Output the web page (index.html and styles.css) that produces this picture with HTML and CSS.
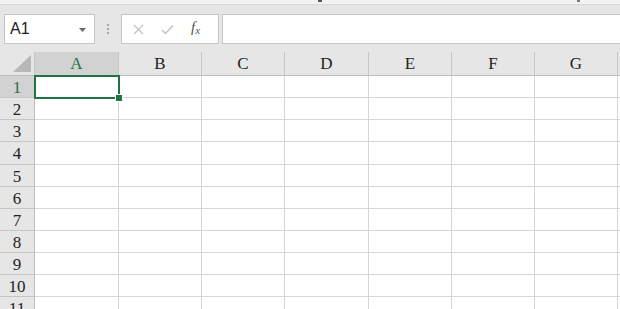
FILE: index.html
```html
<!DOCTYPE html>
<html>
<head>
<meta charset="utf-8">
<link rel="stylesheet" href="styles.css">
</head>
<body>
<div class="app">
  <div class="ribbon-edge"><span class="mark m1"></span><span class="mark m2"></span></div>
  <div class="formula-bar">
    <div class="name-box">
      <span class="name-text">A1</span>
      <svg class="caret" width="7" height="4" viewBox="0 0 7 4"><path d="M0 0h7L3.5 4z" fill="#6a6a6a"/></svg>
    </div>
    <div class="grip"><i></i><i></i><i></i></div>
    <div class="fx-box">
      <svg class="ic" width="11" height="11" viewBox="0 0 11 11"><path d="M1 1L10 10M10 1L1 10" stroke="#c4c4c4" stroke-width="1.3" fill="none"/></svg>
      <svg class="ic" width="13" height="11" viewBox="0 0 13 11"><path d="M1 6L4.5 9.5L12 1.5" stroke="#c4c4c4" stroke-width="1.5" fill="none"/></svg>
      <span class="fx">f<sub>x</sub></span>
    </div>
    <div class="formula-input"></div>
  </div>
  <div class="sheet">
    <div class="grid">
      <div class="corner"><svg width="18" height="17" viewBox="0 0 18 17"><path d="M18 0V17H0z" fill="#b7b7b7"/></svg></div>
      <div class="ch sel">A</div><div class="ch">B</div><div class="ch">C</div><div class="ch">D</div><div class="ch">E</div><div class="ch">F</div><div class="ch">G</div><div class="ch"></div>
      <div class="rh sel">1</div><div class="c"></div><div class="c"></div><div class="c"></div><div class="c"></div><div class="c"></div><div class="c"></div><div class="c"></div><div class="c"></div>
      <div class="rh">2</div><div class="c"></div><div class="c"></div><div class="c"></div><div class="c"></div><div class="c"></div><div class="c"></div><div class="c"></div><div class="c"></div>
      <div class="rh">3</div><div class="c"></div><div class="c"></div><div class="c"></div><div class="c"></div><div class="c"></div><div class="c"></div><div class="c"></div><div class="c"></div>
      <div class="rh">4</div><div class="c"></div><div class="c"></div><div class="c"></div><div class="c"></div><div class="c"></div><div class="c"></div><div class="c"></div><div class="c"></div>
      <div class="rh">5</div><div class="c"></div><div class="c"></div><div class="c"></div><div class="c"></div><div class="c"></div><div class="c"></div><div class="c"></div><div class="c"></div>
      <div class="rh">6</div><div class="c"></div><div class="c"></div><div class="c"></div><div class="c"></div><div class="c"></div><div class="c"></div><div class="c"></div><div class="c"></div>
      <div class="rh">7</div><div class="c"></div><div class="c"></div><div class="c"></div><div class="c"></div><div class="c"></div><div class="c"></div><div class="c"></div><div class="c"></div>
      <div class="rh">8</div><div class="c"></div><div class="c"></div><div class="c"></div><div class="c"></div><div class="c"></div><div class="c"></div><div class="c"></div><div class="c"></div>
      <div class="rh">9</div><div class="c"></div><div class="c"></div><div class="c"></div><div class="c"></div><div class="c"></div><div class="c"></div><div class="c"></div><div class="c"></div>
      <div class="rh">10</div><div class="c"></div><div class="c"></div><div class="c"></div><div class="c"></div><div class="c"></div><div class="c"></div><div class="c"></div><div class="c"></div>
      <div class="rh">11</div><div class="c"></div><div class="c"></div><div class="c"></div><div class="c"></div><div class="c"></div><div class="c"></div><div class="c"></div><div class="c"></div>
    </div>
    <div class="selection"><span class="handle"></span></div>
  </div>
</div>
</body>
</html>
```
FILE: styles.css
```css
html, body {
  margin: 0;
  padding: 0;
  background: #ffffff;
  overflow: hidden;
}
.app {
  width: 620px;
  height: 309px;
  overflow: hidden;
  font-family: "Liberation Sans", Arial, sans-serif;
}
.ribbon-edge {
  position: relative;
  height: 4px;
  background: #f3f3f3;
  border-bottom: 1px solid #d6d6d6;
}
.mark {
  position: absolute;
  top: 0;
  height: 2px;
  background: #555;
}
.m1 { left: 318px; width: 4px; }
.m2 { left: 577px; width: 3px; background: #777; }
.formula-bar {
  height: 47px;
  background: #e6e6e6;
  display: flex;
  align-items: flex-start;
  padding-top: 9px;
  box-sizing: border-box;
}
.name-box {
  margin-left: 4px;
  width: 91px;
  height: 30px;
  box-sizing: border-box;
  background: #fff;
  border: 1px solid #c6c6c6;
  display: flex;
  align-items: center;
  justify-content: space-between;
  padding: 0 8px 0 5px;
}
.name-text {
  font-size: 16px;
  color: #222;
}
.caret { margin-top: 1px; }
.grip {
  width: 26px;
  height: 30px;
  display: flex;
  flex-direction: column;
  align-items: center;
  justify-content: center;
  gap: 2px;
}
.grip i {
  display: block;
  width: 2px;
  height: 2px;
  background: #a8a8a8;
}
.fx-box {
  width: 98px;
  height: 30px;
  box-sizing: border-box;
  background: #fff;
  border: 1px solid #c6c6c6;
  display: flex;
  align-items: center;
  padding-left: 11px;
  gap: 17px;
}
.fx {
  font-family: "Liberation Serif", serif;
  font-style: italic;
  font-size: 15px;
  color: #555;
  margin-top: -3px;
}
.fx sub { font-size: 11px; vertical-align: -2px; }
.formula-input {
  margin-left: 3px;
  flex: 1;
  height: 30px;
  box-sizing: border-box;
  background: #fff;
  border: 1px solid #c6c6c6;
  border-right: none;
}
.sheet {
  position: relative;
}
.grid {
  display: grid;
  grid-template-columns: 35px 84px 83px 83px 84px 83px 83px 83px 40px;
  grid-template-rows: 24px 22px 22px 22px 23px repeat(7, 22px);
}
.grid > div {
  box-sizing: border-box;
  border-right: 1px solid #d6d6d6;
  border-bottom: 1px solid #d6d6d6;
}
.corner {
  background: #e6e6e6;
  display: flex;
  align-items: flex-end;
  justify-content: flex-end;
  padding: 0 3px 3px 0;
  border-right-color: #c6c6c6 !important;
  border-bottom-color: #bdbdbd !important;
}
.corner svg { display: block; }
.ch, .rh {
  background: #e6e6e6;
  font-family: "Liberation Serif", "Times New Roman", serif;
  font-size: 17px;
  color: #222;
  display: flex;
  align-items: center;
  justify-content: center;
}
.ch {
  border-right-color: #c6c6c6 !important;
  border-bottom-color: #bdbdbd !important;
  padding-top: 1px;
}
.rh {
  border-right-color: #bdbdbd !important;
  border-bottom-color: #c6c6c6 !important;
  padding-top: 2px;
}
.ch.sel, .rh.sel {
  background: #d2d2d2;
  color: #217346;
}
.c { background: #fff; }
.selection {
  position: absolute;
  left: 34px;
  top: 23px;
  width: 86px;
  height: 24px;
  box-sizing: border-box;
  border: 2px solid #217346;
}
.handle {
  position: absolute;
  right: -5px;
  bottom: -5px;
  width: 6px;
  height: 6px;
  background: #217346;
  border: 1px solid #fff;
}
```
